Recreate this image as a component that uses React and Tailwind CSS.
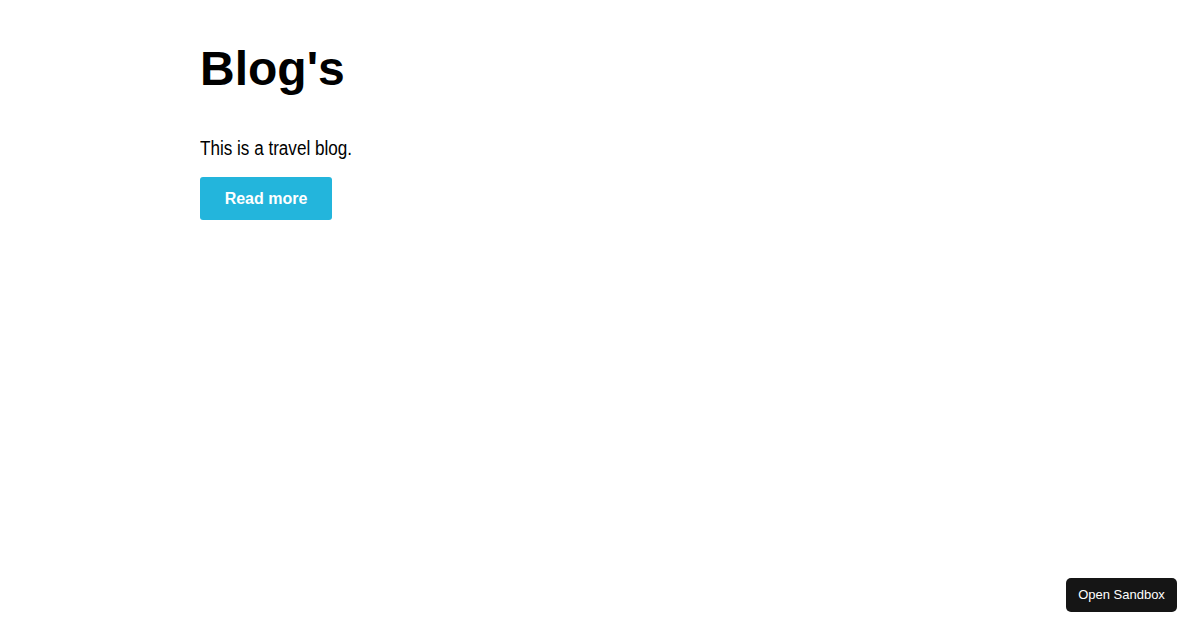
export default function App() {
  return (
    <div className="relative min-h-[630px] w-full bg-white text-black font-['Liberation_Sans',Arial,sans-serif]">
      <div className="mx-auto w-[800px] pt-[41px]">
        <h1 className="text-[48px] font-bold leading-[55px]">Blog's</h1>
        <p className="mt-[41px] text-[20px] leading-[23px]">
          <span className="inline-block origin-left scale-x-[0.855] whitespace-nowrap">This is a travel blog.</span>
        </p>
        <button className="mt-[17px] flex h-[43px] w-[132px] items-center justify-center rounded-[3px] bg-[#23b5dc] text-[16px] font-bold text-white">
          Read more
        </button>
      </div>
      <button className="absolute bottom-[18px] right-[23px] flex h-[34px] w-[111px] items-center justify-center rounded-[5px] bg-[#151515] text-[13px] text-white">
        Open Sandbox
      </button>
    </div>
  );
}
